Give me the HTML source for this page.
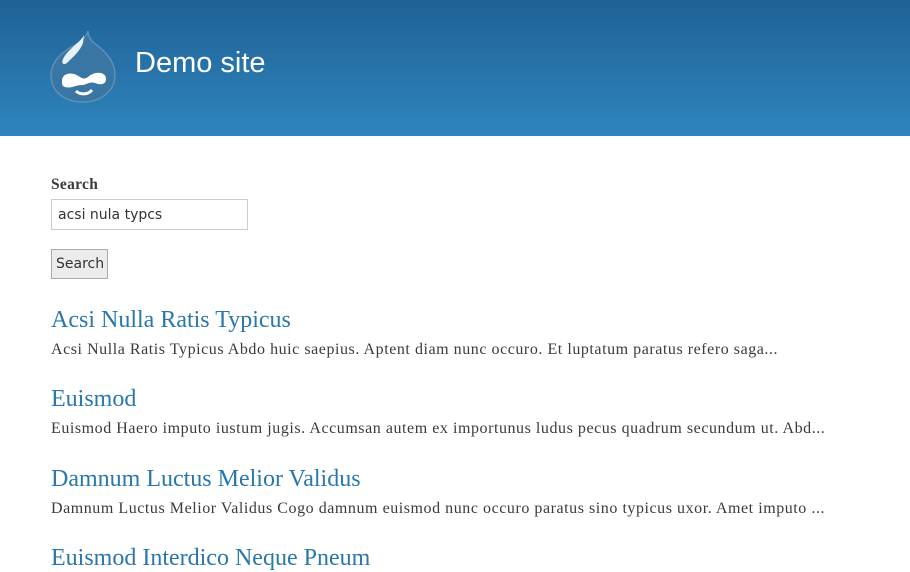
<!DOCTYPE html>
<html><head><meta charset="utf-8">
<style>
body{margin:0;width:910px;height:565px;overflow:hidden;background:#fff;font-family:"Liberation Serif",Georgia,serif;color:#3b3b3b}
.hdr{height:136px;background:linear-gradient(#1f6295,#2f84bd);position:relative}
.logo{position:absolute;left:50px;top:29px}
.site{position:absolute;left:135px;top:47px;font-family:"Liberation Sans",sans-serif;font-size:29px;color:#fff}
.main{position:absolute;left:51px;top:176px;width:850px}
label{font-weight:bold;font-size:15.5px;display:block;letter-spacing:0.3px}
.inp{margin-top:5px;width:197px;height:31px;border:1px solid #ccc;box-sizing:border-box;font-family:"DejaVu Sans",sans-serif;font-size:14px;padding:7px 6px;color:#333}
.btn{margin-top:19px;width:57px;height:30px;border:1px solid #aaa;background:#ececec;box-sizing:border-box;font-family:"DejaVu Sans",sans-serif;font-size:14px;padding:6px 4px;color:#333}
h3{font-weight:normal;font-size:24px;letter-spacing:0;color:#2a77ac;margin:0;line-height:28px}
p{margin:6px 0 0;font-size:16px;letter-spacing:0.55px;line-height:20px;white-space:nowrap}
.r{position:absolute;left:0}
</style></head><body>
<div class="hdr">
<svg class="logo" width="66" height="74" viewBox="0 0 66 74">
<path d="M38 2 C36 10 28 14 20 19 C8 26 1 35 1 47 C1 62 14 73 33 73 C52 73 65 61 65 46 C65 30 52 20 44 14 C40 11 38 6 38 2Z" fill="#3a76a4" stroke="#5c8fb8" stroke-width="1.5"/>
<path d="M34 6 C30 14 18 20 13 30 C11 35 14 37 18 33 C24 27 30 22 33 14Z" fill="#e8f1f8"/>
<path d="M12 52 C12 44 22 42 30 48 C33 50 35 50 38 48 C44 42 56 42 56 50 C56 56 50 56 45 54 C40 52 36 56 32 56 C26 56 20 60 15 58 C12 57 12 55 12 52Z" fill="#fff"/>
<path d="M26 62 C30 66 38 66 42 61" stroke="#fff" stroke-width="3" fill="none"/>
</svg>
<div class="site">Demo site</div>
</div>
<div class="main">
<label>Search</label>
<div class="inp">acsi nula typcs</div>
<div class="btn">Search</div>
<div class="r" style="top:130px"><h3>Acsi Nulla Ratis Typicus</h3><p>Acsi Nulla Ratis Typicus Abdo huic saepius. Aptent diam nunc occuro. Et luptatum paratus refero saga...</p></div>
<div class="r" style="top:209px"><h3>Euismod</h3><p>Euismod Haero imputo iustum jugis. Accumsan autem ex importunus ludus pecus quadrum secundum ut. Abd...</p></div>
<div class="r" style="top:289px"><h3>Damnum Luctus Melior Validus</h3><p>Damnum Luctus Melior Validus Cogo damnum euismod nunc occuro paratus sino typicus uxor. Amet imputo ...</p></div>
<div class="r" style="top:368px"><h3>Euismod Interdico Neque Pneum</h3></div>
</div>
</body></html>
